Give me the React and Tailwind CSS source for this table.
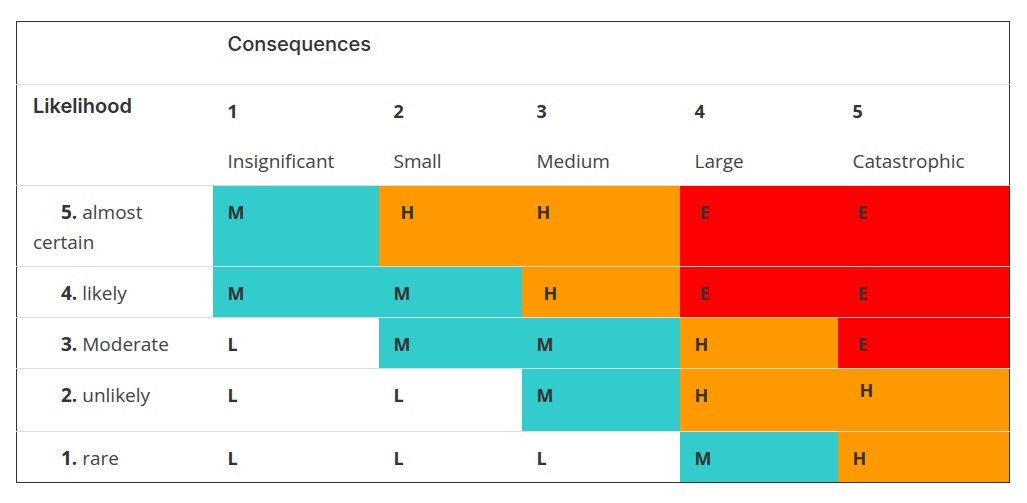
import React from 'react';

const CYAN = 'bg-[#33cccc]';
const ORANGE = 'bg-[#ff9900]';
const RED = 'bg-[#ff0000]';

// risk matrix rows: label number, label text, cells [letter, colour, extra class]
const rows = [
  {
    num: '5.',
    label: 'almost certain',
    h: 'h-[81px]',
    cells: [
      ['M', CYAN, ''],
      ['H', ORANGE, 'pl-[22px]'],
      ['H', ORANGE, ''],
      ['E', RED, 'pl-[20px] text-[#6e1f1f]'],
      ['E', RED, 'pl-[20px] text-[#6e1f1f]'],
    ],
  },
  {
    num: '4.',
    label: 'likely',
    h: 'h-[51px]',
    cells: [
      ['M', CYAN, ''],
      ['M', CYAN, ''],
      ['H', ORANGE, 'pl-[22px]'],
      ['E', RED, 'pl-[20px] text-[#6e1f1f]'],
      ['E', RED, 'pl-[20px] text-[#6e1f1f]'],
    ],
  },
  {
    num: '3.',
    label: 'Moderate',
    h: 'h-[51px]',
    cells: [
      ['L', 'bg-white', ''],
      ['M', CYAN, ''],
      ['M', CYAN, ''],
      ['H', ORANGE, ''],
      ['E', RED, 'pl-[20px] text-[#6e1f1f]'],
    ],
  },
  {
    num: '2.',
    label: 'unlikely',
    h: 'h-[63px]',
    cells: [
      ['L', 'bg-white', ''],
      ['L', 'bg-white', ''],
      ['M', CYAN, ''],
      ['H', ORANGE, ''],
      ['H', ORANGE, 'pl-[22px] !pt-[6px]'],
    ],
  },
  {
    num: '1.',
    label: 'rare',
    h: 'h-[51px]',
    cells: [
      ['L', 'bg-white', ''],
      ['L', 'bg-white', ''],
      ['L', 'bg-white', ''],
      ['M', CYAN, ''],
      ['H', ORANGE, ''],
    ],
  },
];

const consequences = [
  ['1', 'Insignificant'],
  ['2', 'Small'],
  ['3', 'Medium'],
  ['4', 'Large'],
  ['5', 'Catastrophic'],
];

export default function App() {
  return (
    <div className="min-h-screen bg-white pt-[21px] pl-[16px]" style={{ fontFamily: '"Open Sans", sans-serif' }}>
      <table className="table-fixed border-collapse border border-[#333] w-[993px] text-[#444]">
        <colgroup>
          <col className="w-[196px]" />
          <col className="w-[166px]" />
          <col className="w-[143px]" />
          <col className="w-[158px]" />
          <col className="w-[158px]" />
          <col className="w-[172px]" />
        </colgroup>
        <tbody>
          {/* heading row */}
          <tr className="h-[63px]">
            <td />
            <td colSpan={5} className="align-top pt-[7px] pl-[15px]">
              <span className="font-medium text-[20px] leading-[30px] text-[#333]" style={{ fontFamily: 'Inter, sans-serif' }}>
                Consequences
              </span>
            </td>
          </tr>
          <tr className="h-[101px] border-t border-[#dddddd]">
            <td className="align-top pt-[6px] pl-[16px]">
              <span className="font-semibold text-[20px] leading-[30px] text-[#333]" style={{ fontFamily: 'Inter, sans-serif' }}>
                Likelihood
              </span>
            </td>
            {consequences.map(([n, name]) => (
              <td key={n} className="align-top pt-[11px] pl-[15px]">
                <div className="font-bold text-[18px] leading-[30px] text-[#333]">{n}</div>
                <div className="text-[19px] leading-[30px] mt-[20px]">{name}</div>
              </td>
            ))}
          </tr>
          {rows.map((row) => (
            <tr key={row.num} className={`${row.h} border-t border-[#dddddd]`}>
              <td className="align-top pt-[11px] pl-[16px] pr-[40px] text-[19px] leading-[30px] indent-[28px]">
                <b className="text-[#333]">{row.num}</b> {row.label}
              </td>
              {row.cells.map(([letter, bg, extra], i) => (
                <td
                  key={i}
                  className={`align-top pt-[11px] pl-[15px] font-bold text-[18px] leading-[30px] text-[#333] ${bg} ${extra}`}
                >
                  {letter}
                </td>
              ))}
            </tr>
          ))}
        </tbody>
      </table>
    </div>
  );
}
